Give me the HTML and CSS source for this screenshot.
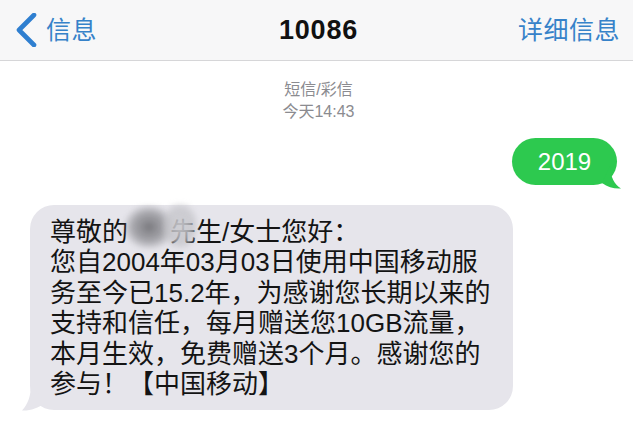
FILE: index.html
```html
<!DOCTYPE html>
<html lang="zh-CN">
<head>
<meta charset="utf-8">
<title>10086</title>
<link rel="stylesheet" href="styles.css">
</head>
<body>
<div class="screen">
  <header class="nav">
    <div class="nav-left">
      <svg class="chevron" width="24" height="34" viewBox="0 0 24 34" aria-hidden="true">
        <path d="M20 2 L5 17 L20 32" fill="none" stroke="#2f7fd0" stroke-width="4.6" stroke-linecap="round" stroke-linejoin="round"/>
      </svg>
      <span class="nav-link">信息</span>
    </div>
    <div class="nav-title">10086</div>
    <div class="nav-right"><span class="nav-link">详细信息</span></div>
  </header>
  <main class="thread">
    <div class="stamp">
      <div>短信/彩信</div>
      <div>今天14:43</div>
    </div>
    <div class="row row-out">
      <div class="bubble bubble-out">2019
        <svg class="tail tail-out" width="24" height="24" viewBox="0 0 24 24" aria-hidden="true">
          <path d="M11 0 C12 12 15 18 22 22.5 C15 23 9 21 3 17 Z" fill="#2dc94f"/>
        </svg>
      </div>
    </div>
    <div class="row row-in">
      <div class="bubble bubble-in">
        <div class="line">尊敬的<span class="redact"></span>先生/女士您好：</div>
        <div class="line">您自2004年03月03日使用中国移动服</div>
        <div class="line">务至今已15.2年，为感谢您长期以来的</div>
        <div class="line">支持和信任，每月赠送您10GB流量，</div>
        <div class="line">本月生效，免费赠送3个月。感谢您的</div>
        <div class="line">参与！【中国移动】</div>
        <svg class="tail tail-in" width="30" height="30" viewBox="0 0 30 30" aria-hidden="true">
          <path d="M13 0 C13 13 10 21 4 27.5 C12 28 20 25 27 20 Z" fill="#e6e5eb"/>
        </svg>
      </div>
    </div>
  </main>
</div>
</body>
</html>
```
FILE: styles.css
```css
* { box-sizing: border-box; }
html, body { margin: 0; padding: 0; background: #ffffff; }
body {
  font-family: "Liberation Sans", "Noto Sans CJK SC", sans-serif;
  color: #111111;
}
.screen { width: 633px; height: 425px; overflow: hidden; background: #ffffff; }

.nav {
  height: 61px;
  background: #f7f7f8;
  border-bottom: 1px solid #d6d6d8;
  display: grid;
  grid-template-columns: 1fr auto 1fr;
  align-items: center;
  padding: 0 13px 0 13px;
}
.nav-left { display: flex; align-items: center; gap: 8px; }
.chevron { display: block; margin-left: 1px; margin-top: -1px; }
.nav-link {
  color: #3682c9;
  font-size: 25px;
  line-height: 30px;
  letter-spacing: 0.5px;
}
.nav-title {
  font-family: "Liberation Sans", "Noto Sans CJK SC", sans-serif;
  font-weight: bold;
  font-size: 27px;
  letter-spacing: 0.8px;
  color: #111;
  margin-left: 4px;
}
.nav-right { display: flex; justify-content: flex-end; }

.thread { padding-top: 18px; }
.stamp {
  text-align: center;
  color: #8b8b90;
  font-size: 16px;
  line-height: 22px;
  margin-left: 4px;
}
.row { display: flex; }
.row-out { justify-content: flex-end; padding-right: 16px; margin-top: 15px; }
.row-in { justify-content: flex-start; padding-left: 30px; margin-top: 20px; }

.bubble { position: relative; }
.bubble-out {
  width: 105px;
  height: 47px;
  border-radius: 24px;
  background: #2dc94f;
  color: #ffffff;
  font-family: "Liberation Sans", sans-serif;
  font-size: 24px;
  display: flex;
  align-items: center;
  justify-content: center;
}
.bubble-in {
  width: 483px;
  background: #e6e5eb;
  border-radius: 24px;
  padding: 12px 10px 11px 20px;
}
.line {
  font-size: 26px;
  line-height: 30.4px;
  white-space: nowrap;
  color: #141414;
}
.redact {
  display: inline-block;
  position: relative;
  width: 42px;
  height: 30px;
  vertical-align: -6px;
}
.redact::before {
  content: "";
  position: absolute;
  left: -4px; top: -12px;
  width: 50px; height: 44px;
  background: radial-gradient(ellipse at center, rgba(110,110,115,0.9) 0%, rgba(140,140,145,0.7) 45%, rgba(200,200,205,0) 75%);
  filter: blur(2px);
}
.redact::after {
  content: "";
  position: absolute;
  left: 34px; top: -14px;
  width: 36px; height: 46px;
  background: radial-gradient(ellipse at center, rgba(205,205,210,0.95) 0%, rgba(195,195,200,0.75) 50%, rgba(230,229,235,0) 78%);
  filter: blur(2px);
}
.tail { position: absolute; display: block; }
.tail-out { right: -6px; bottom: -5px; }
.tail-in { left: -12px; bottom: -3px; }
```
